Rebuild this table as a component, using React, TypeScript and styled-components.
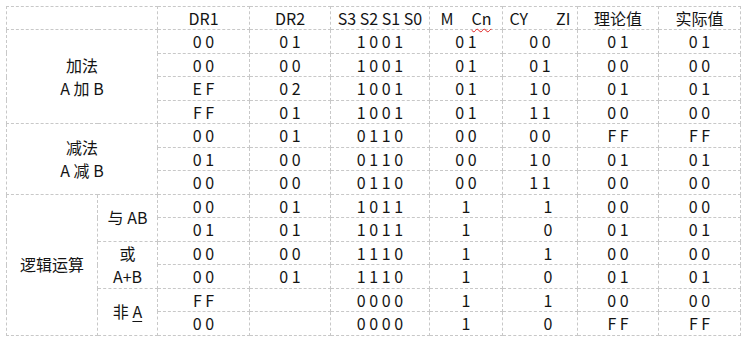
import React from "react";
import styled, { createGlobalStyle } from "styled-components";

const GlobalStyle = createGlobalStyle`
  html, body {
    margin: 0;
    padding: 0;
    background: #ffffff;
  }
  body {
    font-family: "Noto Sans CJK SC", "Noto Sans", sans-serif;
    color: #141414;
  }
`;

const Page = styled.div`
  width: 748px;
  height: 340px;
  overflow: hidden;
  padding: 6px 0 0 6px;
  box-sizing: border-box;
  position: relative;
`;

const Caption = styled.div`
  position: absolute;
  top: -17px;
  left: 242px;
  font-size: 15px;
  line-height: 16px;
  color: #555;
`;

const Table = styled.table`
  border-collapse: collapse;
  table-layout: fixed;
  width: 734px;
  font-size: 16px;
`;

const Cell = styled.td<{ $shift?: number }>`
  border: 1px dashed #c8c8c8;
  height: 22.5px;
  padding: 0 0 0 ${(p) => p.$shift ?? 0}px;
  text-align: center;
  vertical-align: middle;
  white-space: pre;
  line-height: 22px;
`;

const HeadCell = styled(Cell)`
  height: 22px;
`;

const GroupCell = styled(Cell)`
  line-height: 23px;
`;

const Wavy = styled.span`
  text-decoration: underline wavy #e02020;
  text-underline-offset: 3px;
  text-decoration-thickness: 1px;
`;

const Gap = styled.span<{ $w: number }>`
  display: inline-block;
  width: ${(p) => p.$w}px;
`;

const Over = styled.span`
  text-decoration: underline;
  text-underline-offset: 3px;
`;

type Row = [string, string, string, string, string, string, string];

const rows: Row[] = [
  ["0 0", "0 1", "1 0 0 1", "0 1", "0 0", "0 1", "0 1"],
  ["0 0", "0 0", "1 0 0 1", "0 1", "0 1", "0 0", "0 0"],
  ["E F", "0 2", "1 0 0 1", "0 1", "1 0", "0 1", "0 1"],
  ["F F", "0 1", "1 0 0 1", "0 1", "1 1", "0 0", "0 0"],
  ["0 0", "0 1", "0 1 1 0", "0 0", "0 0", "F F", "F F"],
  ["0 1", "0 0", "0 1 1 0", "0 0", "1 0", "0 1", "0 1"],
  ["0 0", "0 0", "0 1 1 0", "0 0", "1 1", "0 0", "0 0"],
  ["0 0", "0 1", "1 0 1 1", "1", "1", "0 0", "0 0"],
  ["0 1", "0 1", "1 0 1 1", "1", "0", "0 1", "0 1"],
  ["0 0", "0 0", "1 1 1 0", "1", "1", "0 0", "0 0"],
  ["0 0", "0 1", "1 1 1 0", "1", "0", "0 1", "0 1"],
  ["F F", "", "0 0 0 0", "1", "1", "0 0", "0 0"],
  ["0 0", "", "0 0 0 0", "1", "0", "F F", "F F"],
];

function lead(i: number) {
  if (i === 0)
    return (
      <GroupCell colSpan={2} rowSpan={4}>
        加法
        <br />A 加 B
      </GroupCell>
    );
  if (i === 4)
    return (
      <GroupCell colSpan={2} rowSpan={3}>
        减法
        <br />A 减 B
      </GroupCell>
    );
  const out: React.ReactNode[] = [];
  if (i === 7)
    out.push(
      <GroupCell key="g" rowSpan={6}>
        逻辑运算
      </GroupCell>
    );
  if (i === 7) out.push(<GroupCell key="s" rowSpan={2}>与 AB</GroupCell>);
  if (i === 9)
    out.push(
      <GroupCell key="s" rowSpan={2}>
        或<br />
        A+B
      </GroupCell>
    );
  if (i === 11)
    out.push(
      <GroupCell key="s" rowSpan={2}>
        非 <Over>A</Over>
      </GroupCell>
    );
  return out;
}

export default function App() {
  return (
    <Page>
      <GlobalStyle />
      <Caption>操作结果</Caption>
      <Table>
        <colgroup>
          <col style={{ width: 91 }} />
          <col style={{ width: 60 }} />
          <col style={{ width: 92 }} />
          <col style={{ width: 81 }} />
          <col style={{ width: 99 }} />
          <col style={{ width: 73 }} />
          <col style={{ width: 75 }} />
          <col style={{ width: 81 }} />
          <col style={{ width: 82 }} />
        </colgroup>
        <tbody>
          <tr>
            <HeadCell colSpan={2} />
            <HeadCell>DR1</HeadCell>
            <HeadCell>DR2</HeadCell>
            <HeadCell>S3 S2 S1 S0</HeadCell>
            <HeadCell>
              M<Gap $w={18} />
              <Wavy>Cn</Wavy>
            </HeadCell>
            <HeadCell>
              CY<Gap $w={28} />
              ZI
            </HeadCell>
            <HeadCell>理论值</HeadCell>
            <HeadCell>实际值</HeadCell>
          </tr>
          {rows.map((r, i) => (
            <tr key={i}>
              {lead(i)}
              {r.map((v, j) => (
                <Cell key={j} $shift={j === 4 && v.length === 1 ? 16 : 0}>
                  {v}
                </Cell>
              ))}
            </tr>
          ))}
        </tbody>
      </Table>
    </Page>
  );
}
